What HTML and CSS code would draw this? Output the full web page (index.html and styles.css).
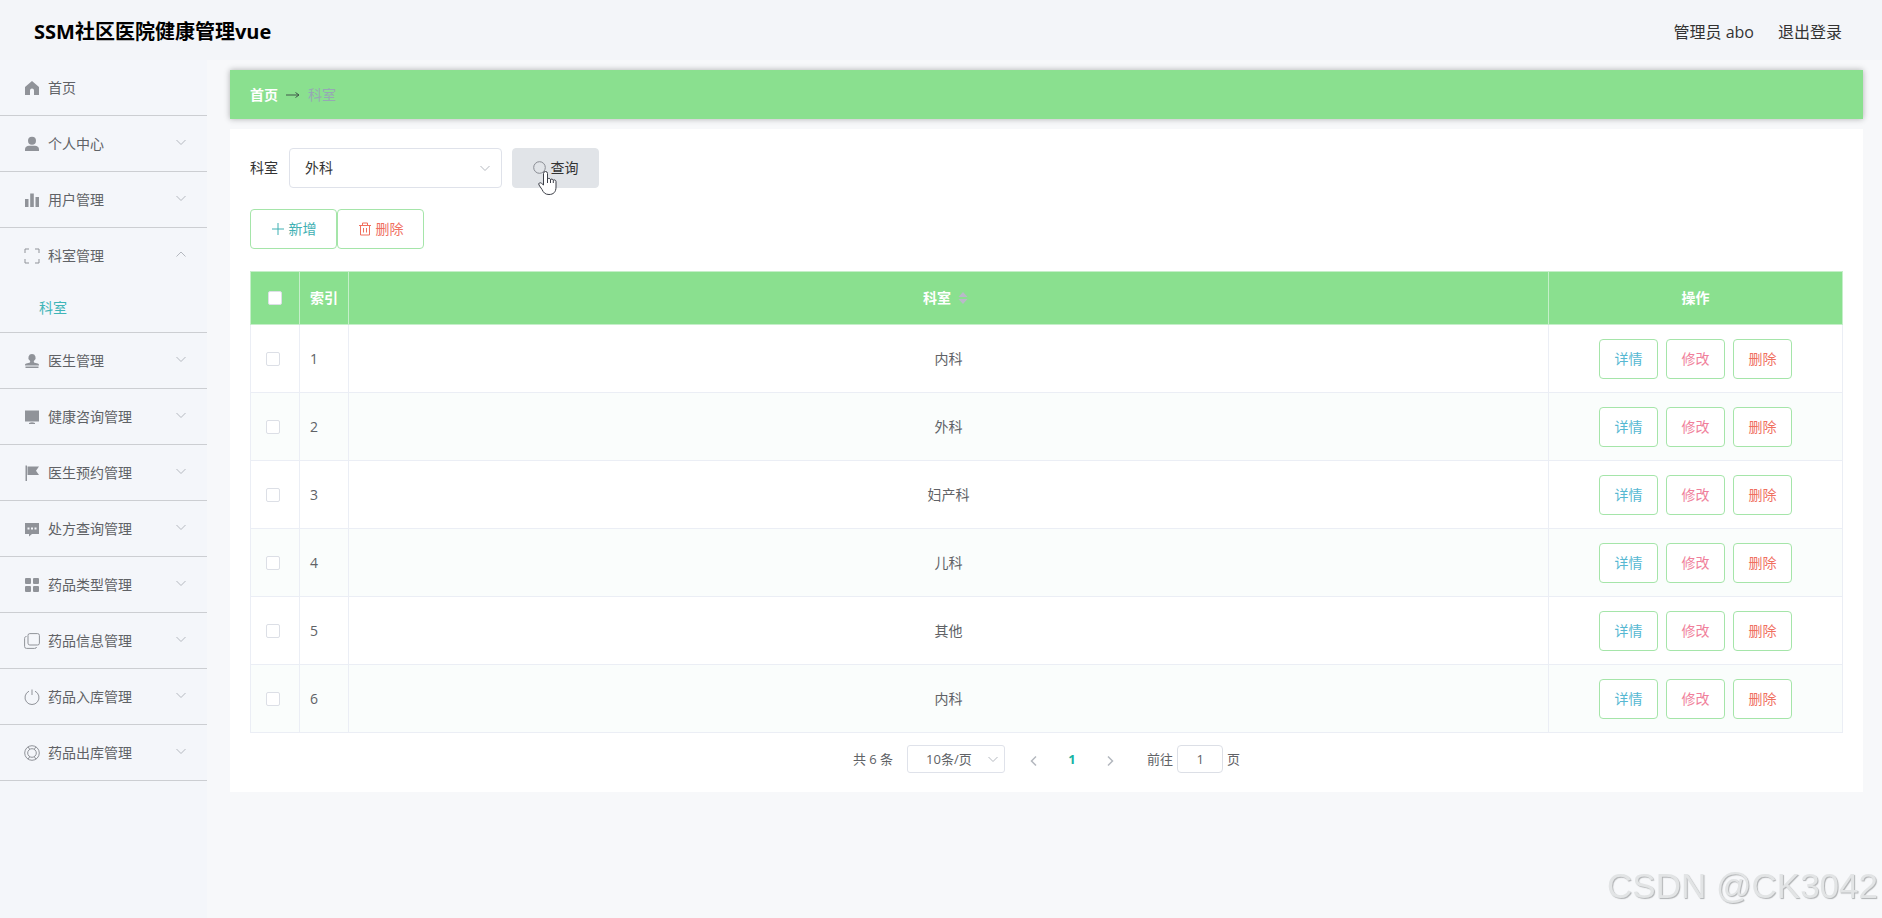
FILE: index.html
```html
<!DOCTYPE html>
<html lang="zh-CN">
<head>
    <meta charset="UTF-8">
    <meta name="viewport" content="width=device-width, initial-scale=1.0">
    <title>SSM社区医院健康管理vue</title>
    <link rel="stylesheet" href="styles.css">
</head>
<body>
    <!-- icons -->
    <svg class="sprite" aria-hidden="true">
        <symbol id="i-home" viewBox="0 0 16 16"><path d="M8 1 1 7v8h5v-4.500a2 2 0 0 1 4 0V15h5V7z"/></symbol>
        <symbol id="i-user" viewBox="0 0 16 16"><circle cx="8" cy="4.800" r="4"/><path d="M1 15v-1.500C1 11 2.800 9.800 5 9.800h6c2.200 0 4 1.200 4 3.700V15z"/></symbol>
        <symbol id="i-data" viewBox="0 0 16 16"><path d="M1 7h3.500v8H1zM6.200 1.500h3.600V15H6.200zM11.500 5H15v10h-3.500z"/></symbol>
        <symbol id="i-full" viewBox="0 0 16 16"><path class="line" d="M1 5V1h4M11 1h4v4M15 11v4h-4M5 15H1v-4"/></symbol>
        <symbol id="i-check" viewBox="0 0 16 16"><path d="M8 1a3.600 3.600 0 0 1 2.300 6.400c-.8.700-.6 2 .4 2.300l3 .8c.8.200 1.300.8 1.300 1.600v.4H1v-.4c0-.8.5-1.400 1.300-1.600l3-.8c1-.3 1.200-1.600.4-2.300A3.600 3.600 0 0 1 8 1zM1.500 13.500h13V15h-13z"/></symbol>
        <symbol id="i-screen" viewBox="0 0 16 16"><path d="M1 1.500h14v11H1zM5 14q3-1.500 6 0v1H5z"/></symbol>
        <symbol id="i-flag" viewBox="0 0 16 16"><path d="M1.500 .5H3V16H1.500zM3.500 1.500H15l-3 4.200 3 4.300H3.500z"/></symbol>
        <symbol id="i-chat" viewBox="0 0 16 16"><path fill-rule="evenodd" d="M1 2h14v11H8l-3 2.500V13H1zM3.500 6.500v2h2v-2zM7 6.500v2h2v-2zM10.500 6.500v2h2v-2z"/></symbol>
        <symbol id="i-menu" viewBox="0 0 16 16"><rect x="1" y="1" width="6" height="6" rx="1"/><rect x="9" y="1" width="6" height="6" rx="1"/><rect x="1" y="9" width="6" height="6" rx="1"/><rect x="9" y="9" width="6" height="6" rx="1"/></symbol>
        <symbol id="i-copy" viewBox="0 0 16 16"><rect class="line" x="4" y=".6" width="11.400" height="11.400" rx="1.800"/><path class="line" d="M2.500 3.500C1.200 3.500.6 4.200.6 5.500v8q0 1.900 1.900 1.900h8q2 0 2-1.400"/></symbol>
        <symbol id="i-power" viewBox="0 0 16 16"><path class="line" d="M8 .5V6M5 2.200a7 7 0 1 0 6 0"/></symbol>
        <symbol id="i-help" viewBox="0 0 16 16"><circle class="line" cx="8" cy="8" r="7.300"/><circle class="line" cx="8" cy="8" r="4.300"/><path class="line" d="M4.200 1.800 5.700 4.400M11.800 1.800 10.300 4.400M4.200 14.200 5.700 11.600M11.800 14.200 10.300 11.600"/></symbol>
        <symbol id="i-down" viewBox="0 0 10 10"><path class="line" d="m.5 3 4.500 4.500L9.500 3"/></symbol>
        <symbol id="i-up" viewBox="0 0 10 10"><path class="line" d="M.5 7.500 5 3l4.500 4.500"/></symbol>
        <symbol id="i-left" viewBox="0 0 10 10"><path class="line wide" d="M7 .5 2.500 5 7 9.500"/></symbol>
        <symbol id="i-right" viewBox="0 0 10 10"><path class="line wide" d="M3 .5 7.500 5 3 9.500"/></symbol>
        <symbol id="i-plus" viewBox="0 0 14 14"><path class="line" d="M7 1v12M1 7h12"/></symbol>
        <symbol id="i-trash" viewBox="0 0 14 14"><path class="line" d="M1 3.500h12M4.500 3V1h5v2M2.500 3.500v9.500h9V3.500M5.500 6v4.500M8.500 6v4.500"/></symbol>
        <symbol id="i-search" viewBox="0 0 14 14"><circle class="line" cx="6.500" cy="6.500" r="5.800"/><path class="line" d="m10.500 10.500 3 3"/></symbol>
        <symbol id="i-sort" viewBox="0 0 10 14"><path d="M5 1 9.500 6h-9zM5 13 .5 8h9z"/></symbol>
    </svg>

    <header class="header">
        <h1 class="title">SSM社区医院健康管理vue</h1>
        <div class="user">
            <span>管理员 abo</span>
            <a href="#">退出登录</a>
        </div>
    </header>

    <div class="layout">
        <nav class="sidebar">
            <ul class="menu">
                <li><a href="#"><svg class="icon"><use href="#i-home"/></svg><span>首页</span></a></li>
                <li><a href="#"><svg class="icon"><use href="#i-user"/></svg><span>个人中心</span><svg class="arrow"><use href="#i-down"/></svg></a></li>
                <li><a href="#"><svg class="icon"><use href="#i-data"/></svg><span>用户管理</span><svg class="arrow"><use href="#i-down"/></svg></a></li>
                <li>
                    <a href="#"><svg class="icon"><use href="#i-full"/></svg><span>科室管理</span><svg class="arrow"><use href="#i-up"/></svg></a>
                    <a class="sub" href="#">科室</a>
                </li>
                <li><a href="#"><svg class="icon"><use href="#i-check"/></svg><span>医生管理</span><svg class="arrow"><use href="#i-down"/></svg></a></li>
                <li><a href="#"><svg class="icon"><use href="#i-screen"/></svg><span>健康咨询管理</span><svg class="arrow"><use href="#i-down"/></svg></a></li>
                <li><a href="#"><svg class="icon"><use href="#i-flag"/></svg><span>医生预约管理</span><svg class="arrow"><use href="#i-down"/></svg></a></li>
                <li><a href="#"><svg class="icon"><use href="#i-chat"/></svg><span>处方查询管理</span><svg class="arrow"><use href="#i-down"/></svg></a></li>
                <li><a href="#"><svg class="icon"><use href="#i-menu"/></svg><span>药品类型管理</span><svg class="arrow"><use href="#i-down"/></svg></a></li>
                <li><a href="#"><svg class="icon"><use href="#i-copy"/></svg><span>药品信息管理</span><svg class="arrow"><use href="#i-down"/></svg></a></li>
                <li><a href="#"><svg class="icon"><use href="#i-power"/></svg><span>药品入库管理</span><svg class="arrow"><use href="#i-down"/></svg></a></li>
                <li><a href="#"><svg class="icon"><use href="#i-help"/></svg><span>药品出库管理</span><svg class="arrow"><use href="#i-down"/></svg></a></li>
            </ul>
        </nav>

        <main class="main">
            <div class="breadcrumb">
                <a href="#">首页</a>
                <svg class="to" viewBox="0 0 14 10"><path d="M0 5h13M9.500 2.500 13 5 9.500 7.500"/></svg>
                <span>科室</span>
            </div>

            <div class="card">
                <form class="search">
                    <label for="dept">科室</label>
                    <div class="select">
                        <select id="dept">
                            <option>内科</option>
                            <option selected>外科</option>
                            <option>妇产科</option>
                            <option>儿科</option>
                            <option>其他</option>
                        </select>
                        <svg class="arrow"><use href="#i-down"/></svg>
                    </div>
                    <button type="button" class="btn btn-search">
                        <svg class="btn-icon"><use href="#i-search"/></svg>查询
                        <svg class="pointer" viewBox="0 0 20 26"><path d="M6.500 15V3.500a2 2 0 0 1 4 0V9a1.800 1.800 0 0 1 3 .5 1.800 1.800 0 0 1 2.800.7 1.700 1.700 0 0 1 2.700 1.300V17c0 5-2.500 7.500-7 7.500-4 0-5.500-2-7-5l-3-4.500c-1-1.800 1-3 2.500-1.700zM10.500 9v4M13.500 9.500V13M16.300 10.200V13"/></svg>
                    </button>
                </form>

                <div class="actions">
                    <button type="button" class="btn add"><svg class="btn-icon"><use href="#i-plus"/></svg>新增</button>
                    <button type="button" class="btn del"><svg class="btn-icon"><use href="#i-trash"/></svg>删除</button>
                </div>

                <table class="table">
                    <colgroup>
                        <col class="col-s">
                        <col class="col-s">
                        <col>
                        <col class="col-op">
                    </colgroup>
                    <thead>
                        <tr>
                            <th><input type="checkbox" aria-label="全选"></th>
                            <th>索引</th>
                            <th><span class="sortable">科室<svg><use href="#i-sort"/></svg></span></th>
                            <th>操作</th>
                        </tr>
                    </thead>
                    <tbody>
                        <tr>
                            <td class="sel"><input type="checkbox" aria-label="选择 1"></td>
                            <td class="idx">1</td>
                            <td>内科</td>
                            <td><div class="ops"><button class="btn detail">详情</button><button class="btn edit">修改</button><button class="btn del">删除</button></div></td>
                        </tr>
                        <tr>
                            <td class="sel"><input type="checkbox" aria-label="选择 2"></td>
                            <td class="idx">2</td>
                            <td>外科</td>
                            <td><div class="ops"><button class="btn detail">详情</button><button class="btn edit">修改</button><button class="btn del">删除</button></div></td>
                        </tr>
                        <tr>
                            <td class="sel"><input type="checkbox" aria-label="选择 3"></td>
                            <td class="idx">3</td>
                            <td>妇产科</td>
                            <td><div class="ops"><button class="btn detail">详情</button><button class="btn edit">修改</button><button class="btn del">删除</button></div></td>
                        </tr>
                        <tr>
                            <td class="sel"><input type="checkbox" aria-label="选择 4"></td>
                            <td class="idx">4</td>
                            <td>儿科</td>
                            <td><div class="ops"><button class="btn detail">详情</button><button class="btn edit">修改</button><button class="btn del">删除</button></div></td>
                        </tr>
                        <tr>
                            <td class="sel"><input type="checkbox" aria-label="选择 5"></td>
                            <td class="idx">5</td>
                            <td>其他</td>
                            <td><div class="ops"><button class="btn detail">详情</button><button class="btn edit">修改</button><button class="btn del">删除</button></div></td>
                        </tr>
                        <tr>
                            <td class="sel"><input type="checkbox" aria-label="选择 6"></td>
                            <td class="idx">6</td>
                            <td>内科</td>
                            <td><div class="ops"><button class="btn detail">详情</button><button class="btn edit">修改</button><button class="btn del">删除</button></div></td>
                        </tr>
                    </tbody>
                </table>

                <div class="pagination">
                    <span>共 6 条</span>
                    <div class="select size">
                        <select aria-label="每页条数">
                            <option>10条/页</option>
                            <option>20条/页</option>
                        </select>
                        <svg class="arrow"><use href="#i-down"/></svg>
                    </div>
                    <div class="pager">
                        <button type="button" aria-label="上一页"><svg class="arrow"><use href="#i-left"/></svg></button>
                        <button type="button" class="active">1</button>
                        <button type="button" aria-label="下一页"><svg class="arrow"><use href="#i-right"/></svg></button>
                    </div>
                    <div class="jump">
                        <label for="page">前往</label>
                        <input id="page" type="text" value="1">
                        <span>页</span>
                    </div>
                </div>
            </div>
        </main>
    </div>

    <div class="watermark">CSDN @CK3042</div>
</body>
</html>
```

FILE: styles.css
```css
* {
    box-sizing: border-box;
}
body {
    margin: 0;
    min-height: 100vh;
    display: flex;
    flex-direction: column;
    background-color: #f7f8fa;
    color: #606266;
    font-family: "Open Sans", "Noto Sans CJK SC", sans-serif;
    font-size: 14px;
    line-height: 20px;
}
button,
input,
select {
    font: inherit;
    color: inherit;
}
a {
    color: inherit;
    text-decoration: none;
}
.sprite {
    display: none;
}
svg {
    fill: currentColor;
}
.line {
    fill: none;
    stroke: currentColor;
}
.wide {
    stroke-width: 1.5;
}

/* header */
.header {
    height: 60px;
    padding: 3px 40px 0 34px;
    display: flex;
    justify-content: space-between;
    align-items: center;
    background-color: #f3f5f9;
}
.title {
    margin: 0;
    font-size: 20px;
    font-weight: bold;
    color: #000;
}
.user {
    display: flex;
    gap: 24px;
    font-size: 16px;
    color: #333;
}

/* sidebar */
.layout {
    flex: 1;
    display: flex;
}
.sidebar {
    width: 207px;
    flex-shrink: 0;
    background-color: #f4f6fa;
}
.menu {
    margin: 0;
    padding: 0;
    list-style: none;
}
.menu li {
    border-bottom: 1px solid #ccced2;
}
.menu a {
    height: 55px;
    padding: 0 21px 0 24px;
    display: flex;
    align-items: center;
}
.menu .icon {
    width: 16px;
    height: 16px;
    margin-right: 8px;
    color: #909399;
}
.arrow {
    width: 10px;
    height: 10px;
    color: #b4b8bf;
}
.menu .arrow {
    margin-left: auto;
    margin-bottom: 4px;
}
.menu .sub {
    height: 49px;
    padding-left: 39px;
    color: #3fb5b8;
}

/* content */
.main {
    flex: 1;
    min-width: 0;
    padding: 10px 19px 20px 23px;
}
.breadcrumb {
    height: 49px;
    padding: 0 20px;
    display: flex;
    align-items: center;
    gap: 8px;
    background-color: #8ae08f;
    box-shadow: 0 0 6px rgba(0, 0, 0, 0.3);
    color: #96a8b4;
}
.breadcrumb a {
    font-weight: bold;
    color: #fff;
}
.to {
    width: 14px;
    height: 10px;
    fill: none;
    stroke: #40584a;
}
.card {
    margin-top: 10px;
    padding: 19px 20px;
    background-color: #fff;
}
.search {
    display: flex;
    align-items: center;
    color: #333;
}
.select {
    position: relative;
    width: 213px;
    margin: 0 10px 0 11px;
}
.select select {
    appearance: none;
    width: 100%;
    height: 40px;
    padding: 0 15px;
    border: 1px solid #dfe2ea;
    border-radius: 4px;
    background-color: #fff;
}
.select .arrow {
    position: absolute;
    top: 50%;
    right: 12px;
    margin-top: -5px;
    pointer-events: none;
}
.btn {
    height: 40px;
    padding: 0 14px;
    border: 1px solid #a5e5a9;
    border-radius: 4px;
    background-color: #fff;
    white-space: nowrap;
    cursor: pointer;
}
.btn-search,
.actions .btn {
    position: relative;
    width: 87px;
    display: flex;
    align-items: center;
    justify-content: center;
    gap: 4px;
}
.btn-search {
    border-color: #e1e4e8;
    background-color: #e1e4e8;
}
.btn-icon {
    width: 14px;
    height: 14px;
    flex-shrink: 0;
}
.btn-search .btn-icon {
    color: #888b92;
}
.pointer {
    position: absolute;
    top: 21px;
    left: 24px;
    width: 20px;
    height: 26px;
    fill: #fff;
    stroke: #3c3f48;
}
.actions {
    margin: 21px 0 22px;
    display: flex;
}
.add {
    color: #3fb0b3;
}
.del {
    color: #f0705f;
}
.detail {
    color: #56b8d2;
}
.edit {
    color: #f07f9b;
}

/* table */
.table {
    width: 100%;
    table-layout: fixed;
    border-collapse: collapse;
    text-align: center;
}
.col-s {
    width: 49px;
}
.col-op {
    width: 294px;
}
th {
    height: 53px;
    padding: 0;
    border: 1px solid #c5efc9;
    background-color: #8ae08f;
    color: #fff;
    white-space: nowrap;
}
td {
    height: 68px;
    padding: 0;
    border: 1px solid #ebeef5;
}
tbody tr:nth-child(even) {
    background-color: #fafdfc;
}
.sel {
    padding-right: 4px;
}
.idx {
    padding-left: 10px;
    text-align: left;
}
.table input {
    appearance: none;
    display: block;
    width: 14px;
    height: 14px;
    margin: 0 auto;
    border: 1px solid #dcdfe6;
    border-radius: 2px;
    background-color: #fff;
}
.sortable {
    padding-right: 6px;
    display: inline-flex;
    align-items: center;
    gap: 7px;
}
.sortable svg {
    width: 10px;
    height: 14px;
    color: #b9b9c9;
}
.ops {
    display: flex;
    justify-content: center;
    gap: 8px;
}
.ops .btn {
    width: 59px;
}

/* pagination */
.pagination {
    padding: 12px 0 0;
    display: flex;
    justify-content: center;
    align-items: center;
    font-size: 13px;
}
.size {
    width: 98px;
    margin: 0 10px 0 14px;
}
.size select {
    height: 28px;
    padding: 0 18px;
    border-radius: 3px;
}
.size .arrow {
    right: 7px;
}
.pager {
    display: flex;
}
.pager button {
    width: 38px;
    height: 28px;
    padding: 0;
    border: none;
    background: none;
}
.pager .arrow {
    vertical-align: middle;
}
.pager .active {
    font-weight: bold;
    color: #17b3a3;
}
.jump {
    margin-left: 18px;
    display: flex;
    align-items: center;
    gap: 4px;
}
.jump input {
    width: 46px;
    height: 28px;
    padding: 0;
    border: 1px solid #dcdfe6;
    border-radius: 4px;
    text-align: center;
}

.watermark {
    position: fixed;
    right: 4px;
    bottom: 10px;
    font-family: "Liberation Sans", sans-serif;
    font-size: 35px;
    line-height: 44px;
    color: #e2e4e5;
    text-shadow: 1px 1px 1px #b0b2b4;
    pointer-events: none;
}
```
